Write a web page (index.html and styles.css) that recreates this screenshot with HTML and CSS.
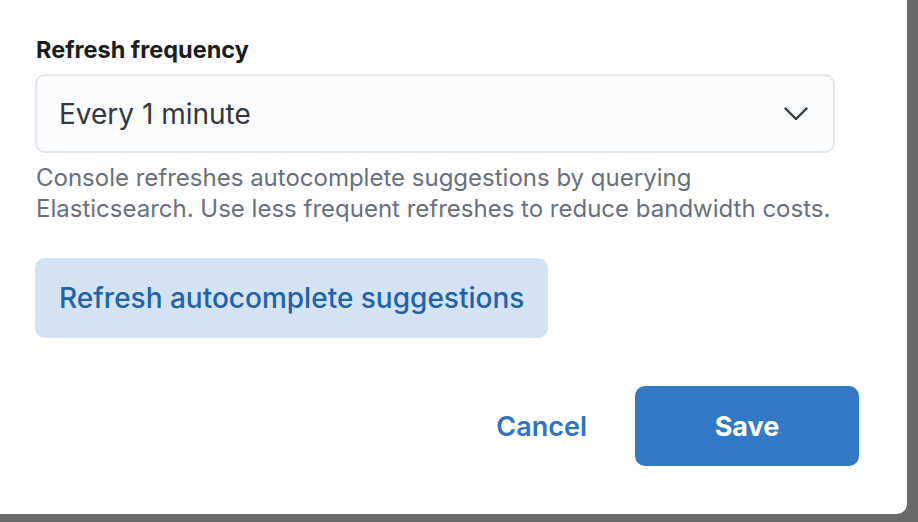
FILE: index.html
```html
<!DOCTYPE html>
<html lang="en">
<head>
    <meta charset="UTF-8">
    <title>Console settings</title>
    <link rel="stylesheet" href="styles.css">
</head>
<body>
    <div class="modal">
        <div class="modal-body">
            <div class="form-row">
                <label class="form-label" for="refreshFrequency">Refresh frequency</label>
                <div class="select-wrap">
                    <select id="refreshFrequency" class="select">
                        <option>Every 1 minute</option>
                        <option>Every 10 minutes</option>
                        <option>Every 20 minutes</option>
                        <option>Every 1 hour</option>
                    </select>
                    <svg class="select-arrow" viewBox="0 0 24 14" width="24" height="14">
                        <path d="M1.5 1.5 L12 12 L22.5 1.5" fill="none" stroke="#343741" stroke-width="2.4" stroke-linecap="round" stroke-linejoin="round"/>
                    </svg>
                </div>
                <div class="help-text">
                    Console refreshes autocomplete suggestions by querying<br>
                    Elasticsearch. Use less frequent refreshes to reduce bandwidth costs.
                </div>
            </div>
            <button class="btn-soft">Refresh autocomplete suggestions</button>
        </div>
        <div class="modal-footer">
            <button class="btn-link">Cancel</button>
            <button class="btn-primary">Save</button>
        </div>
    </div>
</body>
</html>
```

FILE: styles.css
```css
body {
    margin: 0;
    height: 522px;
    background-color: #6a6a6c;
    font-family: Inter, "Noto Sans", sans-serif;
    overflow: hidden;
}

.modal {
    width: 907px;
    height: 514px;
    background-color: #ffffff;
    border-bottom-right-radius: 10px;
    box-sizing: border-box;
    display: flex;
    flex-direction: column;
}

.modal-body {
    padding: 36px 0 0 35px;
}

.form-label {
    display: block;
    font-size: 23.5px;
    font-weight: 700;
    color: #1a1c21;
    line-height: 28px;
    margin-bottom: 10px;
    margin-left: 1px;
}

.select-wrap {
    position: relative;
    width: 800px;
}

.select {
    appearance: none;
    width: 100%;
    height: 79px;
    padding: 0 60px 0 22px;
    margin: 0;
    border: 2px solid #e3e6ef;
    border-radius: 10px;
    background-color: #fbfcfd;
    font-family: inherit;
    font-size: 28px;
    color: #343741;
    box-sizing: border-box;
}

.select-arrow {
    position: absolute;
    right: 27px;
    top: 33px;
    pointer-events: none;
}

.help-text {
    margin-top: 9px;
    margin-left: 1px;
    font-size: 24px;
    line-height: 31px;
    color: #69707d;
}

.btn-soft {
    margin-top: 34px;
    height: 80px;
    padding: 0 24px;
    border: none;
    border-radius: 10px;
    background-color: #d4e2f4;
    color: #1f63ad;
    font-family: inherit;
    font-size: 28px;
    font-weight: 500;
}

.modal-footer {
    display: flex;
    justify-content: flex-end;
    align-items: center;
    gap: 48px;
    padding: 48px 48px 0 0;
}

.btn-link {
    border: none;
    background: none;
    padding: 0;
    font-family: inherit;
    font-size: 27px;
    font-weight: 600;
    color: #2f73c2;
}

.btn-primary {
    width: 224px;
    height: 80px;
    border: none;
    border-radius: 10px;
    background-color: #3178c6;
    color: #ffffff;
    font-family: inherit;
    font-size: 27px;
    font-weight: 700;
}
```
